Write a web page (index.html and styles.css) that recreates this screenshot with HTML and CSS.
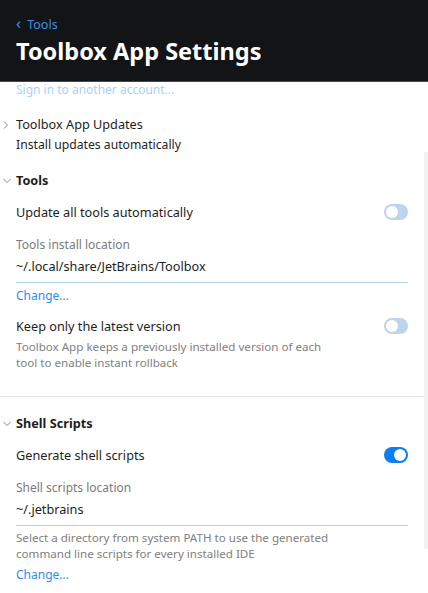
FILE: index.html
```html
<!DOCTYPE html>
<html>
<head>
<meta charset="utf-8">
<link rel="stylesheet" href="styles.css">
</head>
<body>
<div class="app">
  <header class="header">
    <div class="back"><span class="back-chev">‹</span> Tools</div>
    <h1 class="title">Toolbox App Settings</h1>
  </header>
  <main class="content">
    <div class="signin">Sign in to another account…</div>

    <section class="group collapsed">
      <div class="group-head">
        <svg class="chev" width="8" height="10" viewBox="0 0 8 10"><path d="M2 1.5 L5.5 5 L2 8.5" fill="none" stroke="#8a8a8a" stroke-width="1"/></svg>
        <span class="head-text">Toolbox App Updates</span>
      </div>
      <div class="sub">Install updates automatically</div>
    </section>

    <section class="group tools">
      <div class="group-head bold">
        <svg class="chev" width="10" height="8" viewBox="0 0 10 8"><path d="M1.5 2 L5 5.5 L8.5 2" fill="none" stroke="#8a8a8a" stroke-width="1"/></svg>
        <span class="head-text">Tools</span>
      </div>
      <div class="row toggle-row first">
        <span>Update all tools automatically</span>
        <span class="toggle"><span class="knob"></span></span>
      </div>
      <div class="field">
        <div class="field-label">Tools install location</div>
        <div class="field-value">~/.local/share/JetBrains/Toolbox</div>
      </div>
      <div class="link">Change…</div>
      <div class="row toggle-row keep">
        <span>Keep only the latest version</span>
        <span class="toggle"><span class="knob"></span></span>
      </div>
      <div class="desc">Toolbox App keeps a previously installed version of each<br>tool to enable instant rollback</div>
    </section>

    <section class="group shell">
      <div class="group-head bold">
        <svg class="chev" width="10" height="8" viewBox="0 0 10 8"><path d="M1.5 2 L5 5.5 L8.5 2" fill="none" stroke="#8a8a8a" stroke-width="1"/></svg>
        <span class="head-text">Shell Scripts</span>
      </div>
      <div class="row toggle-row first">
        <span>Generate shell scripts</span>
        <span class="toggle on"><span class="knob"></span></span>
      </div>
      <div class="field">
        <div class="field-label">Shell scripts location</div>
        <div class="field-value">~/.jetbrains</div>
      </div>
      <div class="desc desc2">Select a directory from system PATH to use the generated<br>command line scripts for every installed IDE</div>
      <div class="link link2">Change…</div>
    </section>
  </main>
  <div class="scrollbar"></div>
</div>
</body>
</html>
```

FILE: styles.css
```css
* { box-sizing: border-box; }
html, body { margin: 0; padding: 0; background: #ffffff; }
body {
  font-family: "Noto Sans", "Open Sans", sans-serif;
  color: #1e1e1e;
  font-size: 12.7px;
  width: 428px;
  height: 593px;
  overflow: hidden;
}
.app { position: relative; width: 428px; height: 593px; overflow: hidden; }

.header {
  background: #131416;
  height: 82px;
  border-bottom: 1px solid #464a50;
  padding: 13px 16px 0 16px;
}
.back {
  color: #3a93e6;
  font-size: 12.5px;
  line-height: 20px;
  height: 20px;
}
.back-chev { font-size: 16px; margin-right: 3px; display: inline-block; }
.title {
  margin: 3px 0 0 0;
  color: #ffffff;
  font-size: 23.5px;
  font-weight: 700;
  line-height: 30px;
}

.content { padding: 0 20px 0 16px; }

.signin {
  color: #a8d2f6;
  font-size: 12px;
  line-height: 16px;
  height: 16px;
}

.group-head {
  position: relative;
  line-height: 21px;
  height: 21px;
}
.group-head.bold { font-weight: 700; line-height: 20px; height: 20px; }
.chev { position: absolute; left: -14px; top: 6px; }
.group-head.bold .chev { left: -14px; top: 7px; }

.collapsed { margin-top: 16px; }
.sub { line-height: 20px; font-size: 12.2px; }

.tools { margin-top: 15px; }

.row { display: flex; justify-content: space-between; align-items: center; height: 20px; }
.toggle-row.first { margin-top: 12px; }
.toggle-row.keep { margin-top: 11px; }

.toggle {
  width: 24px; height: 16px; border-radius: 8px;
  background: #bcd5ec;
  position: relative;
  flex: none;
}
.toggle .knob {
  position: absolute; left: 2px; top: 2px;
  width: 12px; height: 12px; border-radius: 50%;
  background: #ffffff;
}
.toggle.on { background: #0b7ef2; }
.toggle.on .knob { left: 10px; }

.field { margin-top: 14px; }
.field-label { color: #7b7b7b; font-size: 12px; line-height: 18px; }
.field-value {
  margin-top: 1px;
  line-height: 22px;
  padding-bottom: 5px;
  border-bottom: 1px solid #b9d1e7;
}

.link { color: #2b8ef0; font-size: 12px; line-height: 18px; margin-top: 4px; }
.desc { color: #808080; font-size: 11.6px; line-height: 16px; margin-top: 3px; }
.desc2 { margin-top: 4px; }
.link2 { margin-top: 4px; }

.shell {
  margin: 25px -20px 0 -16px;
  padding: 16px 20px 0 16px;
  border-top: 1px solid #dfe4ea;
}

.scrollbar {
  position: absolute;
  right: 0; top: 152px;
  width: 4px; height: 397px;
  background: #f2f2f2;
  border-radius: 2px 0 0 2px;
}
```
